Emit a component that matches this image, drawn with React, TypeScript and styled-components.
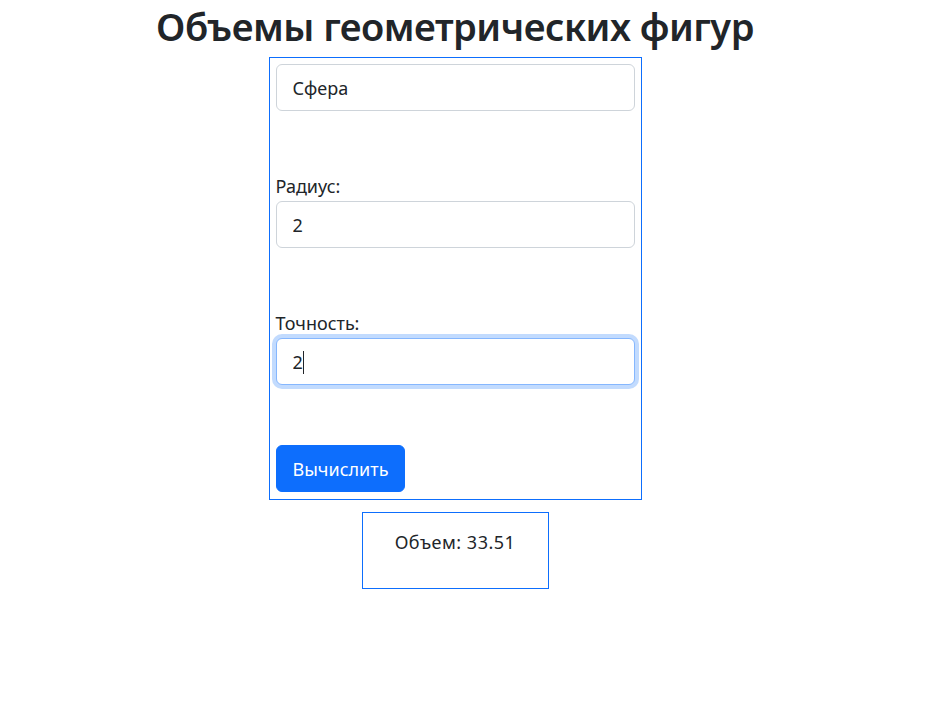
import React from "react";
import styled, { createGlobalStyle } from "styled-components";

const Global = createGlobalStyle`
  html, body { margin: 0; padding: 0; background: #fff; }
  body {
    font-family: "Noto Sans", "Open Sans", sans-serif;
    color: #212529;
    font-size: 16px;
    line-height: 1.5;
  }
  * { box-sizing: border-box; }
`;

const Page = styled.div`
  width: 910px;
  display: flex;
  flex-direction: column;
  align-items: center;
`;

const Title = styled.h1`
  margin: 0 0 7px 0;
  padding-top: 2px;
  font-family: "Noto Sans", "Open Sans", sans-serif;
  font-size: 38px;
  font-weight: 600;
  line-height: 48px;
  letter-spacing: -0.5px;
  color: #212529;
  white-space: nowrap;
`;

const Form = styled.form`
  width: 373px;
  border: 1px solid #0d6efd;
  padding: 6px 6px 7px 6px;
  display: flex;
  flex-direction: column;
`;

const Gap = styled.div`
  height: 60px;
`;

const Label = styled.label`
  display: block;
  font-size: 18px;
  line-height: 30px;
  height: 30px;
  color: #212529;
`;

const fieldBase = `
  width: 100%;
  height: 47px;
  padding: 0 16px;
  font-family: "Noto Sans", "Open Sans", sans-serif;
  font-size: 18px;
  color: #212529;
  background: #fff;
  border-radius: 6px;
  outline: none;
`;

const Select = styled.select`
  ${fieldBase}
  border: 1px solid #ced4da;
  appearance: none;
  -webkit-appearance: none;
`;

const FieldWrap = styled.div`
  position: relative;
`;

const Input = styled.input<{ $focused?: boolean }>`
  ${fieldBase}
  display: block;
  border: 1px solid ${(p) => (p.$focused ? "#86b7fe" : "#ced4da")};
  box-shadow: ${(p) => (p.$focused ? "0 0 0 4px rgba(13,110,253,0.25)" : "none")};
`;

const Caret = styled.span`
  position: absolute;
  left: 27px;
  top: 13px;
  width: 1px;
  height: 23px;
  background: #212529;
`;

const Button = styled.button`
  align-self: flex-start;
  height: 47px;
  padding: 0 16px;
  font-family: "Noto Sans", "Open Sans", sans-serif;
  font-size: 18px;
  color: #fff;
  background: #0d6efd;
  border: 1px solid #0d6efd;
  border-radius: 6px;
`;

const Result = styled.div`
  margin-top: 12px;
  width: 187px;
  height: 77px;
  border: 1px solid #0d6efd;
  padding-top: 16px;
  text-align: center;
  font-size: 18px;
  line-height: 27px;
  letter-spacing: 0.5px;
`;

export default function App() {
  return (
    <>
      <Global />
      <Page>
        <Title>Объемы геометрических фигур</Title>
        <Form onSubmit={(e) => e.preventDefault()}>
          <Select defaultValue="sphere">
            <option value="sphere">Сфера</option>
            <option value="cube">Куб</option>
            <option value="cylinder">Цилиндр</option>
          </Select>
          <Gap />
          <Label>Радиус:</Label>
          <Input type="text" defaultValue="2" />
          <Gap />
          <Label>Точность:</Label>
          <FieldWrap>
            <Input type="text" defaultValue="2" $focused />
            <Caret />
          </FieldWrap>
          <Gap />
          <Button type="submit">Вычислить</Button>
        </Form>
        <Result>Объем: 33.51</Result>
      </Page>
    </>
  );
}
